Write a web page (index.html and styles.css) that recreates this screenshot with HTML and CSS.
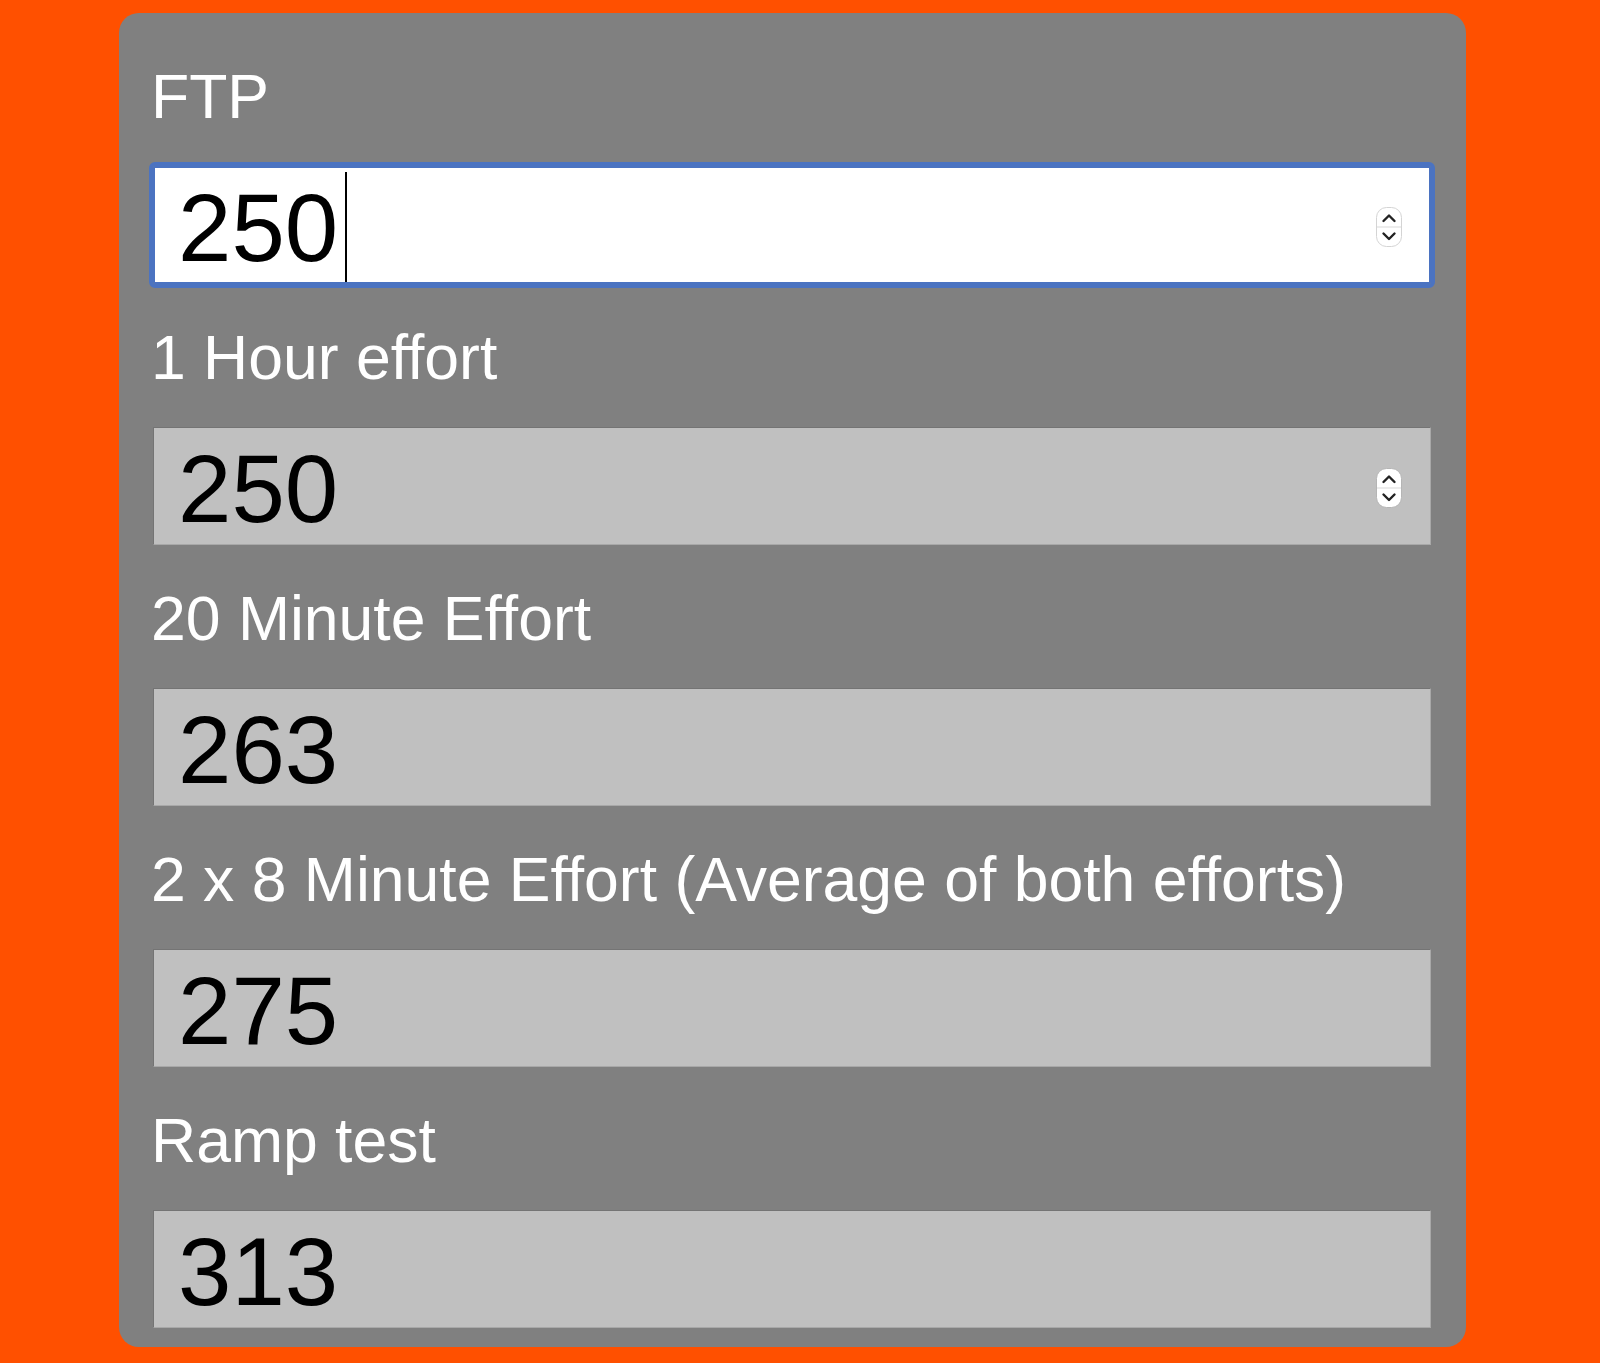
FILE: index.html
```html
<!DOCTYPE html>
<html lang="en">
<head>
    <meta charset="UTF-8">
    <meta name="viewport" content="width=device-width, initial-scale=1.0">
    <link rel="stylesheet" href="styles.css">
    <title>FTP Calculator</title>
</head>
<body>
    <form class="card">
        <label class="label" for="ftp">FTP</label>
        <div class="field">
            <input id="ftp" class="input active" type="text" value="250">
            <span class="caret"></span>
            <span class="spinner">
                <svg width="26" height="40" viewBox="0 0 26 40">
                    <rect x="0.5" y="0.5" width="25" height="39" rx="10" fill="#fff" stroke="#d4d4d4"/>
                    <line x1="1" y1="20" x2="25" y2="20" stroke="#d9d9d9"/>
                    <path d="M7.5 14 L13 8.5 L18.5 14" fill="none" stroke="#222" stroke-width="2.4" stroke-linecap="round" stroke-linejoin="round"/>
                    <path d="M7.5 26.5 L13 32 L18.5 26.5" fill="none" stroke="#222" stroke-width="2.4" stroke-linecap="round" stroke-linejoin="round"/>
                </svg>
            </span>
        </div>

        <label class="label" for="hour">1 Hour effort</label>
        <div class="field">
            <input id="hour" class="input" type="text" value="250">
            <span class="spinner">
                <svg width="26" height="40" viewBox="0 0 26 40">
                    <rect x="0.5" y="0.5" width="25" height="39" rx="10" fill="#fff" stroke="#b5b5b5"/>
                    <line x1="1" y1="20" x2="25" y2="20" stroke="#d9d9d9"/>
                    <path d="M7.5 14 L13 8.5 L18.5 14" fill="none" stroke="#222" stroke-width="2.4" stroke-linecap="round" stroke-linejoin="round"/>
                    <path d="M7.5 26.5 L13 32 L18.5 26.5" fill="none" stroke="#222" stroke-width="2.4" stroke-linecap="round" stroke-linejoin="round"/>
                </svg>
            </span>
        </div>

        <label class="label" for="twenty">20 Minute Effort</label>
        <div class="field">
            <input id="twenty" class="input" type="text" value="263" readonly>
        </div>

        <label class="label" for="eight">2 x 8 Minute Effort (Average of both efforts)</label>
        <div class="field">
            <input id="eight" class="input" type="text" value="275" readonly>
        </div>

        <label class="label" for="ramp">Ramp test</label>
        <div class="field">
            <input id="ramp" class="input" type="text" value="313" readonly>
        </div>
    </form>
</body>
</html>
```

FILE: styles.css
```css
body{
    background-color: #ff5000;
    margin: 0;
    padding: 13px 0 16px;
    font-family: "Liberation Sans", Arial, Helvetica, sans-serif;
}

.card{
    box-sizing: border-box;
    width: 1347px;
    margin-left: 119px;
    padding: 10px 32px 19px 32px;
    background-color: #808080;
    border-radius: 20px;
}

.label{
    display: block;
    margin: 37px 0 34px;
    font-size: 62.5px;
    line-height: 72px;
    color: #fff;
}

.field{
    position: relative;
    margin: 0 3px 0 2px;
}

.input{
    box-sizing: border-box;
    display: block;
    width: 100%;
    height: 118px;
    margin: 0;
    padding: 6px 24px 0;
    font-family: "Liberation Sans", Arial, Helvetica, sans-serif;
    font-size: 96px;
    color: #000;
    background-color: #c0c0c0;
    border: 1px solid #a8a8a8;
    border-top-color: #747474;
    border-left-color: #747474;
    border-radius: 0;
    outline: none;
    caret-color: transparent;
}

.input.active{
    background-color: #fff;
    padding: 5px 23px 0;
    border: 2px solid #4b73c1;
    border-radius: 2px;
    outline: 4px solid #4b73c1;
}

.caret{
    position: absolute;
    left: 192px;
    top: 6px;
    width: 2px;
    height: 110px;
    background-color: #000;
}

.spinner{
    position: absolute;
    right: 29px;
    top: 41px;
    width: 26px;
    height: 40px;
}

.spinner svg{
    display: block;
}
```
